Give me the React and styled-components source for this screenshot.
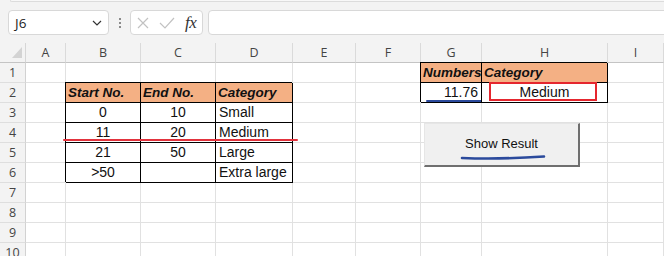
import React from "react";
import styled, { createGlobalStyle } from "styled-components";

const COLS = ["A", "B", "C", "D", "E", "F", "G", "H", "I"];
const ROWS = [1, 2, 3, 4, 5, 6, 7, 8, 9, 10];

// cells that sit inside a black bordered table
const inBox = (col, row) =>
  (["B", "C", "D"].includes(col) && row >= 2 && row <= 6) ||
  (["G", "H"].includes(col) && row >= 1 && row <= 2);

const CELLS = {
  G1: { v: "Numbers", head: true },
  H1: { v: "Category", head: true },
  B2: { v: "Start No.", head: true },
  C2: { v: "End No.", head: true },
  D2: { v: "Category", head: true },
  G2: { v: "11.76", align: "right", mark: "underline" },
  H2: { v: "Medium", align: "center", mark: "frame" },
  B3: { v: "0", align: "center" },
  C3: { v: "10", align: "center" },
  D3: { v: "Small" },
  B4: { v: "11", align: "center" },
  C4: { v: "20", align: "center" },
  D4: { v: "Medium" },
  B5: { v: "21", align: "center" },
  C5: { v: "50", align: "center" },
  D5: { v: "Large" },
  B6: { v: ">50", align: "center" },
  D6: { v: "Extra large" },
};

const App = () => {
  return (
    <>
      <GlobalStyle />
      <Window>
        <RibbonEdge />
        <FormulaBar>
          <NameBox>
            <span>J6</span>
            <svg width="10" height="6" viewBox="0 0 10 6">
              <path d="M1 1 L5 5 L9 1" fill="none" stroke="#333" strokeWidth="1.2" />
            </svg>
          </NameBox>
          <Grip>
            <Dot />
            <Dot />
            <Dot />
          </Grip>
          <FxBox>
            <svg width="12" height="12" viewBox="0 0 12 12">
              <path d="M1 1 L11 11 M11 1 L1 11" fill="none" stroke="#c2c2c2" strokeWidth="1.2" />
            </svg>
            <svg width="16" height="12" viewBox="0 0 16 12">
              <path d="M1 6 L6 11 L15 1" fill="none" stroke="#c2c2c2" strokeWidth="1.2" />
            </svg>
            <Fx>fx</Fx>
          </FxBox>
          <FormulaInput />
        </FormulaBar>

        <SheetArea>
          <Grid>
            <Corner />
            {COLS.map((c) => (
              <ColHeader key={c}>{c}</ColHeader>
            ))}
            {ROWS.map((r) => (
              <React.Fragment key={r}>
                <RowHeader>{r}</RowHeader>
                {COLS.map((c) => {
                  const cell = CELLS[`${c}${r}`] || {};
                  return (
                    <Cell
                      key={c}
                      $boxed={inBox(c, r)}
                      $head={cell.head}
                      $align={cell.align}
                    >
                      {cell.v}
                      {cell.mark === "frame" && <RedFrame />}
                      {cell.mark === "underline" && <BlueMark />}
                    </Cell>
                  );
                })}
              </React.Fragment>
            ))}
          </Grid>

          <StrikeLine />

          <ShowResult>
            Show Result
            <Scribble width="86" height="7" viewBox="0 0 86 7">
              <path d="M2 4 Q 40 5.5 84 2.5" fill="none" stroke="#2b4a9c" strokeWidth="2.6" strokeLinecap="round" />
            </Scribble>
          </ShowResult>
        </SheetArea>
      </Window>
    </>
  );
};

const GlobalStyle = createGlobalStyle`
  html, body {
    margin: 0;
    padding: 0;
    background: #ffffff;
  }

  body {
    font-family: "Liberation Sans", Arial, sans-serif;
    overflow: hidden;
  }

  * {
    box-sizing: border-box;
  }
`;

const Window = styled.div`
  width: 664px;
  height: 256px;
  overflow: hidden;
  background: #f3f3f3;
`;

const RibbonEdge = styled.div`
  height: 2px;
  margin-left: 10px;
  background: #f8f8f8;
  border-left: 1px solid #dcdcdc;
  border-bottom: 1px solid #dcdcdc;
  border-bottom-left-radius: 4px;
`;

const FormulaBar = styled.div`
  display: flex;
  align-items: flex-start;
  height: 41px;
  padding: 8px 0 0 8px;
`;

const Field = styled.div`
  height: 25px;
  background: #ffffff;
  border: 1px solid #d8d8d8;
  border-radius: 4px;
`;

const NameBox = styled(Field)`
  width: 101px;
  display: flex;
  align-items: center;
  justify-content: space-between;
  padding: 0 6px;
  font-family: "Open Sans", "Noto Sans", sans-serif;
  font-size: 13.5px;
  color: #222;
`;

const Grip = styled.div`
  width: 21px;
  height: 25px;
  display: flex;
  flex-direction: column;
  align-items: center;
  justify-content: center;
  gap: 2px;
`;

const Dot = styled.span`
  width: 2px;
  height: 2px;
  background: #8a8a8a;
`;

const FxBox = styled(Field)`
  width: 73px;
  display: flex;
  align-items: center;
  padding-left: 6px;
  gap: 10px;
`;

const Fx = styled.span`
  font-family: "Liberation Serif", "Times New Roman", serif;
  font-style: italic;
  font-size: 17px;
  color: #333;
  letter-spacing: -0.5px;
`;

const FormulaInput = styled(Field)`
  flex: 1;
  margin-left: 5px;
  margin-right: -6px;
`;

const SheetArea = styled.div`
  position: relative;
  background: #ffffff;
`;

const Grid = styled.div`
  display: grid;
  grid-template-columns: 26px 40px 75px 75px 77px 63px 65px 61px 126px 1fr;
  grid-auto-rows: 20px;
`;

const Corner = styled.div`
  position: relative;
  background: #f3f3f3;
  border-right: 1px solid #d6d6d6;
  border-bottom: 1px solid #c4c4c4;

  &::after {
    content: "";
    position: absolute;
    left: 12px;
    top: 4px;
    width: 10px;
    height: 11px;
    background: #d3d3d3;
    clip-path: polygon(100% 0, 100% 100%, 0 100%);
  }
`;

const ColHeader = styled.div`
  background: #f3f3f3;
  border-right: 1px solid #dadada;
  border-bottom: 1px solid #c4c4c4;
  text-align: center;
  line-height: 19px;
  font-family: "Open Sans", "Noto Sans", sans-serif;
  font-size: 12.5px;
  color: #444;
`;

const RowHeader = styled.div`
  background: #f3f3f3;
  border-right: 1px solid #d2d2d2;
  border-bottom: 1px solid #dedede;
  text-align: center;
  line-height: 19px;
  font-family: "Open Sans", "Noto Sans", sans-serif;
  font-size: 12.5px;
  color: #444;
`;

const Cell = styled.div`
  position: relative;
  padding: 0 ${(p) => (p.$head ? "2px" : "3px")};
  border-right: 1px solid ${(p) => (p.$boxed ? "#000" : "#e1e1e1")};
  border-bottom: 1px solid ${(p) => (p.$boxed ? "#000" : "#e1e1e1")};
  box-shadow: ${(p) => (p.$boxed ? "-1px -1px 0 0 #000" : "none")};
  background: ${(p) => (p.$head ? "#f4b084" : "transparent")};
  text-align: ${(p) => p.$align || "left"};
  font-size: ${(p) => (p.$head ? "13.5px" : "14px")};
  font-weight: ${(p) => (p.$head ? 700 : 400)};
  font-style: ${(p) => (p.$head ? "italic" : "normal")};
  line-height: 19px;
  color: #111;
  white-space: nowrap;
`;

const RedFrame = styled.span`
  position: absolute;
  left: 7px;
  right: 10px;
  top: -1px;
  bottom: 1px;
  border: 2px solid #e5262e;
`;

const BlueMark = styled.span`
  position: absolute;
  left: 5px;
  right: -1px;
  bottom: 0;
  height: 2.5px;
  border-radius: 2px;
  background: #2b4a9c;
`;

const StrikeLine = styled.div`
  position: absolute;
  left: 63px;
  top: 96px;
  width: 235px;
  height: 2px;
  border-radius: 1px;
  background: #e2323c;
`;

const ShowResult = styled.div`
  position: absolute;
  left: 424px;
  top: 80px;
  width: 156px;
  height: 44px;
  display: flex;
  align-items: center;
  justify-content: center;
  background: #f0f0f0;
  border-style: solid;
  border-width: 1px 2px 2px 1px;
  border-color: #e6e6e6 #6f6f6f #6f6f6f #e6e6e6;
  font-size: 13px;
  color: #111;
  padding-bottom: 2px;
`;

const Scribble = styled.svg`
  position: absolute;
  left: 35px;
  top: 30px;
`;

export default App;
